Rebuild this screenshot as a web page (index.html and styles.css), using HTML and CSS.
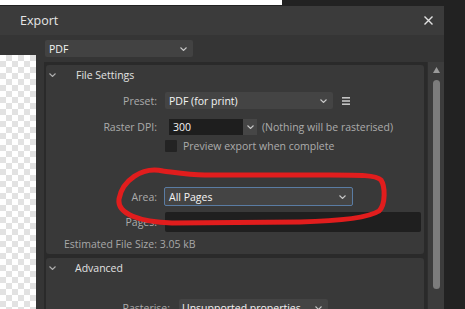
FILE: index.html
```html
<!DOCTYPE html>
<html>
<head>
<meta charset="utf-8">
<title>Export</title>
<link rel="stylesheet" href="styles.css">
</head>
<body>
<div class="topstrip"><div class="whitebar"></div></div>
<div class="dialog">
  <div class="titlebar">
    <span class="title">Export</span>
    <svg class="close" width="9" height="9" viewBox="0 0 9 9"><path d="M0.5 0.5 L8.5 8.5 M8.5 0.5 L0.5 8.5" stroke="#e2e2e2" stroke-width="1.4" fill="none"/></svg>
  </div>
  <div class="main">
    <div class="preview"></div>
    <div class="content">
      <div class="dd format"><span class="ddtext">PDF</span><svg class="chev" width="7" height="4" viewBox="0 0 7 4"><polyline points="0.5,0.5 3.5,3.5 6.5,0.5" fill="none" stroke="#c8c8c8" stroke-width="1.1"/></svg></div>
      <div class="panelrow">
        <div class="panels">
          <div class="section fs">
            <div class="sechead"><svg class="secchev" width="7" height="4" viewBox="0 0 7 4"><polyline points="0.5,0.5 3.5,3.5 6.5,0.5" fill="none" stroke="#b0b0b0" stroke-width="1.1"/></svg><span class="sectitle">File Settings</span></div>
            <div class="row r-preset">
              <span class="lbl">Preset:</span>
              <div class="dd preset"><span class="ddtext">PDF (for print)</span><svg class="chev" width="7" height="4" viewBox="0 0 7 4"><polyline points="0.5,0.5 3.5,3.5 6.5,0.5" fill="none" stroke="#c8c8c8" stroke-width="1.1"/></svg></div>
              <svg class="menu" width="8" height="8" viewBox="0 0 8 8"><rect x="0" y="0" width="8" height="1.6" fill="#c4c4c4"/><rect x="0" y="3.2" width="8" height="1.6" fill="#c4c4c4"/><rect x="0" y="6.4" width="8" height="1.6" fill="#c4c4c4"/></svg>
            </div>
            <div class="row r-dpi">
              <span class="lbl">Raster DPI:</span>
              <div class="dpi"><span class="ddtext">300</span></div>
              <div class="dpibtn"><svg width="7" height="4" viewBox="0 0 7 4"><polyline points="0.5,0.5 3.5,3.5 6.5,0.5" fill="none" stroke="#c8c8c8" stroke-width="1.1"/></svg></div>
              <span class="note">(Nothing will be rasterised)</span>
            </div>
            <div class="row r-check">
              <span class="lbl"></span>
              <div class="checkbox"></div>
              <span class="note checktext">Preview export when complete</span>
            </div>
            <div class="row r-area">
              <span class="lbl">Area:</span>
              <div class="dd area"><span class="ddtext">All Pages</span><svg class="chev" width="7" height="4" viewBox="0 0 7 4"><polyline points="0.5,0.5 3.5,3.5 6.5,0.5" fill="none" stroke="#c8c8c8" stroke-width="1.1"/></svg></div>
            </div>
            <div class="row r-pages">
              <span class="lbl">Pages:</span>
              <div class="pages"></div>
            </div>
            <div class="estimate">Estimated File Size: 3.05 kB</div>
          </div>
          <div class="section adv">
            <div class="sechead"><svg class="secchev" width="7" height="4" viewBox="0 0 7 4"><polyline points="0.5,0.5 3.5,3.5 6.5,0.5" fill="none" stroke="#b0b0b0" stroke-width="1.1"/></svg><span class="sectitle advtitle">Advanced</span></div>
            <div class="row r-raster">
              <span class="lbl lbl-adv">Rasterise:</span>
              <div class="dd raster"><span class="ddtext">Unsupported properties</span><svg class="chev" width="7" height="4" viewBox="0 0 7 4"><polyline points="0.5,0.5 3.5,3.5 6.5,0.5" fill="none" stroke="#c8c8c8" stroke-width="1.1"/></svg></div>
            </div>
          </div>
        </div>
        <div class="scrollbar">
          <svg class="uparrow" width="7" height="6" viewBox="0 0 7 6"><polygon points="3.5,0 7,6 0,6" fill="#9a9a9a"/></svg>
          <div class="thumb"></div>
        </div>
      </div>
    </div>
  </div>
</div>
<svg class="annot" width="465" height="309" viewBox="0 0 465 309">
  <path d="M163 171 C142 166 122 181 119 199 C117 214 140 222 172 223 L300 222 C340 221 368 218 379 211 C386 204 385 186 381 180 C376 175 360 175 330 175 L205 175 C188 175 172 172 163 171 Z" fill="none" stroke="#e11d1d" stroke-width="5" stroke-linecap="round" stroke-linejoin="round"/>
</svg>
</body>
</html>
```
FILE: styles.css
```css
html, body {
  margin: 0;
  padding: 0;
}
body {
  width: 465px;
  height: 309px;
  overflow: hidden;
  background: #222222;
  font-family: "Open Sans", "Noto Sans", sans-serif;
  font-size: 10.5px;
  position: relative;
}
.topstrip {
  height: 6px;
  display: flex;
}
.whitebar {
  width: 282px;
  height: 5px;
  background: #ffffff;
}
.dialog {
  width: 444px;
  height: 303px;
  background: #353535;
  display: flex;
  flex-direction: column;
}
.titlebar {
  height: 29px;
  background: #3b3b3b;
  display: flex;
  align-items: center;
  justify-content: space-between;
  padding-left: 20px;
  padding-right: 11px;
}
.title {
  color: #e6e6e6;
  font-size: 12.5px;
}
.close {
  display: block;
}
.main {
  flex: 1;
  display: flex;
  min-height: 0;
}
.preview {
  width: 36px;
  margin-top: 20px;
  background-color: #ffffff;
  background-image:
    linear-gradient(45deg, #e2e2e2 25%, transparent 25%, transparent 75%, #e2e2e2 75%),
    linear-gradient(45deg, #e2e2e2 25%, transparent 25%, transparent 75%, #e2e2e2 75%);
  background-size: 12px 12px;
  background-position: 0 0, 6px 6px;
}
.content {
  margin-left: 8px;
  flex: 1;
  display: flex;
  flex-direction: column;
  min-height: 0;
}
.dd {
  background: #444444;
  border-radius: 2px;
  display: flex;
  align-items: center;
  justify-content: space-between;
  box-sizing: border-box;
  padding-left: 4px;
  padding-right: 6px;
}
.ddtext {
  color: #f4f4f4;
  white-space: nowrap;
}
.chev {
  display: block;
}
.format {
  margin-top: 5px;
  margin-left: 1px;
  width: 148px;
  height: 17px;
  background: #424242;
}
.panelrow {
  margin-top: 5px;
  flex: 1;
  display: flex;
  min-height: 0;
}
.panels {
  width: 383px;
  background: #2a2a2a;
  box-sizing: border-box;
  padding: 3px 3px 0 2px;
  overflow: hidden;
}
.section {
  background: #393939;
  border-radius: 3px;
}
.fs {
  height: 189px;
  margin-bottom: 4px;
}
.adv {
  height: 60px;
}
.sechead {
  height: 20px;
  display: flex;
  align-items: center;
}
.secchev {
  display: block;
  margin-left: 3px;
}
.sectitle {
  margin-left: 20px;
  color: #e2e2e2;
}
.advtitle {
  margin-left: 19px;
}
.row {
  display: flex;
  align-items: center;
}
.lbl {
  width: 111px;
  flex: none;
  text-align: right;
  color: #ababab;
  white-space: nowrap;
}
.lbl-adv {
  width: 124px;
}
.r-preset {
  margin-top: 7px;
  height: 17px;
}
.preset {
  margin-left: 8px;
  width: 168px;
  height: 17px;
}
.menu {
  display: block;
  margin-left: 9px;
}
.r-dpi {
  margin-top: 10px;
  height: 16px;
}
.dpi {
  margin-left: 12px;
  width: 74px;
  height: 16px;
  background: #1e1e1e;
  display: flex;
  align-items: center;
  padding-left: 4px;
  box-sizing: border-box;
}
.dpibtn {
  width: 14px;
  height: 16px;
  background: #464646;
  display: flex;
  align-items: center;
  justify-content: center;
}
.note {
  color: #acacac;
  margin-left: 5px;
  white-space: nowrap;
}
.r-check {
  margin-top: 5px;
  height: 12px;
}
.checkbox {
  margin-left: 8px;
  width: 12px;
  height: 12px;
  background: #232323;
  border-radius: 1px;
}
.checktext {
  margin-left: 6px;
}
.r-area {
  margin-top: 35px;
  height: 19px;
}
.area {
  margin-left: 7px;
  width: 189px;
  height: 19px;
  border: 1px solid #5a7ca3;
  padding-left: 4px;
}
.r-pages {
  margin-top: 6px;
  height: 20px;
}
.pages {
  margin-left: 8px;
  width: 256px;
  height: 20px;
  background: #1f1f1f;
  border-radius: 2px;
}
.estimate {
  margin-top: 6px;
  height: 12px;
  line-height: 12px;
  padding-left: 18px;
  color: #a8a8a8;
  white-space: nowrap;
}
.r-raster {
  margin-top: 21px;
  height: 17px;
}
.raster {
  margin-left: 9px;
  width: 149px;
  height: 17px;
  padding-left: 3px;
}
.scrollbar {
  flex: 1;
  background: #3c3c3c;
  border-left: 1px solid #2e2e2e;
  display: flex;
  flex-direction: column;
  align-items: center;
}
.uparrow {
  display: block;
  margin-top: 5px;
}
.thumb {
  margin-top: 7px;
  width: 7px;
  height: 209px;
  background: #7c7c7c;
  border-radius: 4px;
}
.annot {
  position: absolute;
  left: 0;
  top: 0;
  pointer-events: none;
}
```
